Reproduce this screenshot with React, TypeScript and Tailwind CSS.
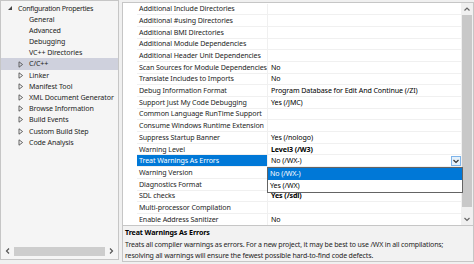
import React from 'react';

const font = "font-['Noto_Sans',_'Open_Sans',_sans-serif]";

interface TreeItem {
  label: string;
  depth: 0 | 1;
  arrow: 'open' | 'closed' | 'none';
  selected?: boolean;
}

const tree: TreeItem[] = [
  { label: 'Configuration Properties', depth: 0, arrow: 'open' },
  { label: 'General', depth: 1, arrow: 'none' },
  { label: 'Advanced', depth: 1, arrow: 'none' },
  { label: 'Debugging', depth: 1, arrow: 'none' },
  { label: 'VC++ Directories', depth: 1, arrow: 'none' },
  { label: 'C/C++', depth: 1, arrow: 'closed', selected: true },
  { label: 'Linker', depth: 1, arrow: 'closed' },
  { label: 'Manifest Tool', depth: 1, arrow: 'closed' },
  { label: 'XML Document Generator', depth: 1, arrow: 'closed' },
  { label: 'Browse Information', depth: 1, arrow: 'closed' },
  { label: 'Build Events', depth: 1, arrow: 'closed' },
  { label: 'Custom Build Step', depth: 1, arrow: 'closed' },
  { label: 'Code Analysis', depth: 1, arrow: 'closed' },
];

interface Prop {
  name: string;
  value?: string;
  bold?: boolean;
  selected?: boolean;
}

// Diagnostics Format value sits under the open list, so it is left blank
const props: Prop[] = [
  { name: 'Additional Include Directories' },
  { name: 'Additional #using Directories' },
  { name: 'Additional BMI Directories' },
  { name: 'Additional Module Dependencies' },
  { name: 'Additional Header Unit Dependencies' },
  { name: 'Scan Sources for Module Dependencies', value: 'No' },
  { name: 'Translate Includes to Imports', value: 'No' },
  { name: 'Debug Information Format', value: 'Program Database for Edit And Continue (/ZI)' },
  { name: 'Support Just My Code Debugging', value: 'Yes (/JMC)' },
  { name: 'Common Language RunTime Support' },
  { name: 'Consume Windows Runtime Extension' },
  { name: 'Suppress Startup Banner', value: 'Yes (/nologo)' },
  { name: 'Warning Level', value: 'Level3 (/W3)', bold: true },
  { name: 'Treat Warnings As Errors', value: 'No (/WX-)', selected: true },
  { name: 'Warning Version' },
  { name: 'Diagnostics Format' },
  { name: 'SDL checks', value: 'Yes (/sdl)', bold: true },
  { name: 'Multi-processor Compilation' },
  { name: 'Enable Address Sanitizer', value: 'No' },
];

const Chevron: React.FC<{ dir: 'up' | 'down' | 'left' | 'right'; className?: string }> = ({ dir, className }) => {
  const d = {
    up: 'M1.5 5.5 L4 3 L6.5 5.5',
    down: 'M1.5 3 L4 5.5 L6.5 3',
    left: 'M5 1.5 L2.5 4 L5 6.5',
    right: 'M3 1.5 L5.5 4 L3 6.5',
  }[dir];
  return (
    <svg width="8" height="8" viewBox="0 0 8 8" className={className}>
      <path d={d} fill="none" stroke="currentColor" strokeWidth="1.2" />
    </svg>
  );
};

export default function App() {
  return (
    <div className={`w-[474px] h-[264px] bg-[#f0f0f0] flex gap-[3px] text-[7.1px] tracking-[-0.1px] leading-none text-black ${font}`}>
      {/* tree */}
      <div className="w-[119px] h-[260px] bg-[#f5f5f5] border border-[#c6c6c6] flex flex-col">
        <div className="flex-1 pt-[1.5px]">
          {tree.map((t) => (
            <div
              key={t.label}
              className={`h-[11.2px] flex items-center whitespace-nowrap overflow-hidden ${t.selected ? 'bg-[#cfd1dd]' : ''}`}
            >
              <span className={`flex justify-center shrink-0 ${t.depth === 0 ? 'w-[17px]' : 'w-[28px] pl-[12px]'}`}>
                {t.arrow === 'open' && (
                  <svg width="6" height="6" viewBox="0 0 6 6">
                    <path d="M5 1 L5 5 L1 5 Z" fill="#444" />
                  </svg>
                )}
                {t.arrow === 'closed' && (
                  <svg width="6" height="7" viewBox="0 0 6 7">
                    <path d="M1 0.8 L4.6 3.5 L1 6.2 Z" fill="none" stroke="#555" strokeWidth="0.9" />
                  </svg>
                )}
              </span>
              <span className={`text-[#1e1e1e] ${t.depth === 0 ? 'tracking-[-0.3px]' : ''}`}>{t.label}</span>
            </div>
          ))}
        </div>
        <div className="h-[12px] mb-[2px] mx-[2px] flex items-center text-[#555]">
          <Chevron dir="left" className="mx-[1px]" />
          <div className="flex-1 h-[9px] bg-[#cdcdcd] mx-[1px]" />
          <Chevron dir="right" className="mx-[1px]" />
        </div>
      </div>

      {/* property grid */}
      <div className="flex-1 mt-[2px] h-[260px] border border-[#c6c6c6] bg-white flex flex-col relative">
        <div className="h-[222px] shrink-0 flex overflow-hidden">
          <div className="flex-1 pl-[14px] pt-[0.5px]">
            {props.map((p) => (
              <div key={p.name} className="h-[11.7px] flex border-b border-[#f0f0f0] whitespace-nowrap">
                <div
                  className={`w-[131px] shrink-0 pl-[2px] flex items-center overflow-hidden border-r border-[#f0f0f0] ${p.selected ? 'bg-[#0078d7] text-white' : 'text-[#1e1e1e]'}`}
                >
                  {p.name}
                </div>
                <div className={`flex-1 flex items-center pl-[3px] overflow-hidden ${p.bold ? 'font-bold' : ''}`}>
                  <span className="flex-1">{p.value}</span>
                  {p.selected && (
                    <span className="w-[10px] h-[10px] border border-[#7eb4ea] bg-[#e5f1fb] flex items-center justify-center text-[#333]">
                      <Chevron dir="down" />
                    </span>
                  )}
                </div>
              </div>
            ))}
          </div>
          <div className="w-[12px] bg-[#f0f0f0] flex flex-col items-center text-[#666]">
            <Chevron dir="up" className="my-[2px]" />
            <div className="w-[10px] h-[192px] bg-[#c8c8c8]" />
            <div className="flex-1" />
            <Chevron dir="down" className="mb-[2px]" />
          </div>
        </div>

        {/* dropdown list */}
        <div className="absolute left-[144px] top-[164px] w-[196px] bg-white border border-[#646464] z-10">
          <div className="h-[12px] flex items-center pl-[2px] bg-[#0078d7] text-white">No (/WX-)</div>
          <div className="h-[12px] flex items-center pl-[2px]">Yes (/WX)</div>
        </div>

        {/* description */}
        <div className="flex-1 bg-[#f2f2f2] border-t border-[#c6c6c6] px-[2px] pt-[3px] flex flex-col gap-[3px] overflow-hidden">
          <div className="font-bold">Treat Warnings As Errors</div>
          <div className="leading-[11px] text-[#1e1e1e] text-[7px] tracking-[-0.15px] whitespace-nowrap">
            Treats all compiler warnings as errors. For a new project, it may be best to use /WX in all compilations;
            <br />
            resolving all warnings will ensure the fewest possible hard-to-find code defects.
          </div>
        </div>
      </div>
    </div>
  );
}
